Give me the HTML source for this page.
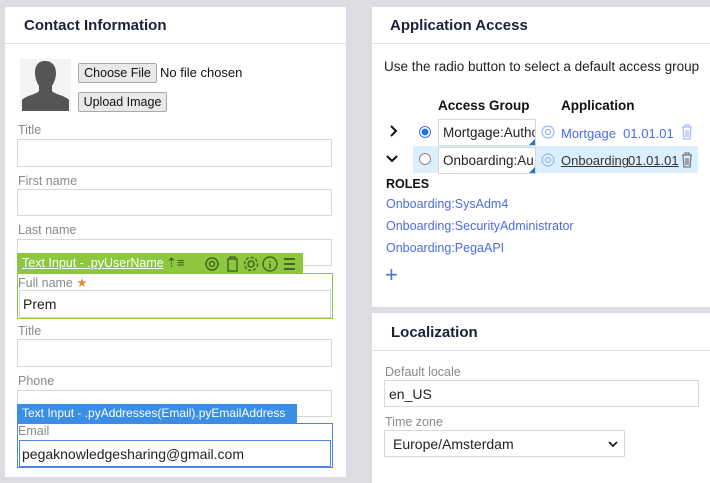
<!DOCTYPE html>
<html><head><meta charset="utf-8"><style>
*{box-sizing:border-box;margin:0;padding:0}
body{width:710px;height:475px;overflow:hidden;background:#dcdde2;font-family:"Liberation Sans",sans-serif;position:relative}
.a{position:absolute}
.panel{position:absolute;background:#fff}
.h{position:absolute;font-weight:bold;font-size:15px;color:#1c1f3a}
.hl{position:absolute;left:0;right:0;height:1px;background:#dfe1e8}
.lbl{position:absolute;font-size:12.5px;color:#8a8a8a}
.inp{position:absolute;border:1px solid #d8d8d8;background:#fff;font-size:14px;color:#222;padding-left:4px;display:flex;align-items:center}
.btn{position:absolute;border:1px solid #aaa;background:#e9e9e9;border-radius:2px;font-size:12.5px;color:#111;display:flex;align-items:center;justify-content:center}
.link{position:absolute;font-size:12.5px;color:#4a6ce8}
</style></head><body>

<div class="panel" style="left:5px;top:7px;width:341px;height:470px">
  <div class="h" style="left:19px;top:10px">Contact Information</div>
  <div class="hl" style="top:36px"></div>
</div>
<svg class="a" style="left:20px;top:59px" width="51" height="52" viewBox="0 0 51 52">
  <rect width="51" height="52" fill="#f4f4f4"/>
  <path d="M25 2c-8 0-10 6-10 12 0 5 2 10 4 13v5c-2 3-14 5-17 9v11h47V41c-3-4-15-6-17-9v-5c2-3 4-8 4-13 0-6-3-12-11-12z" fill="#555"/>
</svg>
<div class="btn" style="left:78px;top:63px;width:79px;height:20px">Choose File</div>
<div class="a" style="left:160px;top:65px;font-size:13px;color:#111">No file chosen</div>
<div class="btn" style="left:78px;top:92px;width:89px;height:20px">Upload Image</div>

<div class="lbl" style="left:18px;top:123px">Title</div>
<div class="inp" style="left:17px;top:139px;width:315px;height:28px"></div>
<div class="lbl" style="left:18px;top:174px">First name</div>
<div class="inp" style="left:17px;top:189px;width:315px;height:27px"></div>
<div class="lbl" style="left:18px;top:223px">Last name</div>
<div class="inp" style="left:17px;top:239px;width:315px;height:27px"></div>

<div class="a" style="left:17px;top:253px;width:286px;height:21px;background:#8dc63f"></div>
<div class="a" style="left:22px;top:256px;font-size:12.5px;color:#fff;text-decoration:underline">Text Input - .pyUserName</div>
<div class="a" style="left:166px;top:255px;font-size:13px;color:#3d5a1a">⇡≡</div>
<svg class="a" style="left:204px;top:255px" width="96" height="18" viewBox="0 0 96 18" fill="none" stroke="#3d5a1a" stroke-width="1.3">
  <circle cx="8" cy="9" r="6"/><circle cx="8" cy="9" r="2.5"/>
  <path d="M24 4h9v12h-9zM26 4v-2h5v2"/>
  <circle cx="47" cy="9" r="3"/><circle cx="47" cy="9" r="6.5" stroke-dasharray="3 2"/>
  <circle cx="66" cy="9" r="7"/><path d="M66 6v1M66 8.5v5"/>
  <path d="M80 4h11M80 9h11M80 14h11" stroke-width="1.8"/>
</svg>
<div class="a" style="left:17px;top:273px;width:316px;height:46px;border:1.5px solid #8dc63f"></div>
<div class="lbl" style="left:18px;top:275px">Full name <span style="color:#e08a2c">★</span></div>
<div class="inp" style="left:19px;top:290px;width:312px;height:28px;padding-left:3px">Prem</div>

<div class="lbl" style="left:18px;top:324px">Title</div>
<div class="inp" style="left:17px;top:339px;width:315px;height:28px"></div>
<div class="lbl" style="left:18px;top:374px">Phone</div>
<div class="inp" style="left:17px;top:390px;width:315px;height:27px"></div>

<div class="a" style="left:17px;top:404px;width:280px;height:20px;background:#3a8ee6"></div>
<div class="a" style="left:22px;top:406px;font-size:12px;color:#fff;white-space:nowrap">Text Input - .pyAddresses(Email).pyEmailAddress</div>
<div class="a" style="left:17px;top:423px;width:316px;height:45px;border:1.5px solid #4a86e8"></div>
<div class="lbl" style="left:18px;top:424px">Email</div>
<div class="inp" style="left:19px;top:440px;width:312px;height:27px;padding-left:2px;border-color:#4a86e8">pegaknowledgesharing@gmail.com</div>

<div class="panel" style="left:372px;top:7px;width:338px;height:300px">
  <div class="h" style="left:18px;top:10px">Application Access</div>
  <div class="hl" style="top:36px"></div>
</div>
<div class="a" style="left:384px;top:59px;font-size:13.5px;color:#222">Use the radio button to select a default access group</div>
<div class="a" style="left:438px;top:98px;font-size:13.5px;font-weight:bold;color:#111">Access Group</div>
<div class="a" style="left:561px;top:98px;font-size:13.5px;font-weight:bold;color:#111">Application</div>

<div class="a" style="left:413px;top:146px;width:285px;height:27px;background:#dcefff"></div>
<svg class="a" style="left:386px;top:124px" width="14" height="40" fill="none" stroke="#111" stroke-width="2"><path d="M5 2l5 5-5 5"/><path d="M1 32l5 5 5-5"/></svg>
<div class="a" style="left:419px;top:126px;width:12px;height:12px;border-radius:50%;border:1px solid #4a6ce8;background:radial-gradient(#1a73e8 45%,#fff 50%)"></div>
<div class="a" style="left:419px;top:153px;width:12px;height:12px;border-radius:50%;border:1px solid #888;background:#fff"></div>
<div class="inp" style="left:438px;top:119px;width:98px;height:27px;overflow:hidden;white-space:nowrap;font-size:13.5px">Mortgage:Autho</div>
<div class="inp" style="left:438px;top:147px;width:98px;height:27px;overflow:hidden;white-space:nowrap;font-size:13.5px">Onboarding:Au</div>
<div class="a" style="left:529px;top:139px;width:0;height:0;border-left:6px solid transparent;border-bottom:6px solid #1a73e8"></div>
<div class="a" style="left:529px;top:167px;width:0;height:0;border-left:6px solid transparent;border-bottom:6px solid #1a73e8"></div>
<svg class="a" style="left:540px;top:124px" width="16" height="44" fill="none" stroke="#9bb3f0" stroke-width="1.2"><circle cx="8" cy="8" r="6"/><circle cx="8" cy="8" r="2.5"/><circle cx="8" cy="36" r="6"/><circle cx="8" cy="36" r="2.5"/></svg>
<div class="link" style="left:561px;top:126px;font-size:13px">Mortgage&nbsp; 01.01.01</div>
<div class="a" style="left:561px;top:153px;font-size:13px;color:#333;text-decoration:underline">Onboarding</div>
<div class="a" style="left:628px;top:153px;font-size:13px;color:#333;text-decoration:underline">01.01.01</div>
<svg class="a" style="left:680px;top:124px" width="14" height="44" fill="none" stroke-width="1.3"><path d="M2 3h10M5 3V1h4v2M3 3l1 12h6l1-12M6 6v7M8 6v7" stroke="#a8bdf2"/><path d="M2 31h10M5 31v-2h4v2M3 31l1 12h6l1-12M6 34v7M8 34v7" stroke="#777"/></svg>

<div class="a" style="left:386px;top:177px;font-size:12.5px;font-weight:bold;color:#111">ROLES</div>
<div class="link" style="left:386px;top:197px">Onboarding:SysAdm4</div>
<div class="link" style="left:386px;top:219px">Onboarding:SecurityAdministrator</div>
<div class="link" style="left:386px;top:241px">Onboarding:PegaAPI</div>
<div class="a" style="left:385px;top:262px;font-size:22px;color:#4a6ce8;font-weight:300">+</div>

<div class="panel" style="left:372px;top:313px;width:338px;height:170px">
  <div class="h" style="left:19px;top:11px">Localization</div>
  <div class="hl" style="top:37px"></div>
</div>
<div class="lbl" style="left:385px;top:365px">Default locale</div>
<div class="inp" style="left:384px;top:380px;width:315px;height:27px">en_US</div>
<div class="lbl" style="left:385px;top:415px">Time zone</div>
<div class="inp" style="left:384px;top:430px;width:241px;height:27px;padding-left:8px">Europe/Amsterdam</div>
<svg class="a" style="left:608px;top:440px" width="10" height="8" fill="none" stroke="#222" stroke-width="1.8"><path d="M1 2l4 4 4-4"/></svg>
</body></html>
